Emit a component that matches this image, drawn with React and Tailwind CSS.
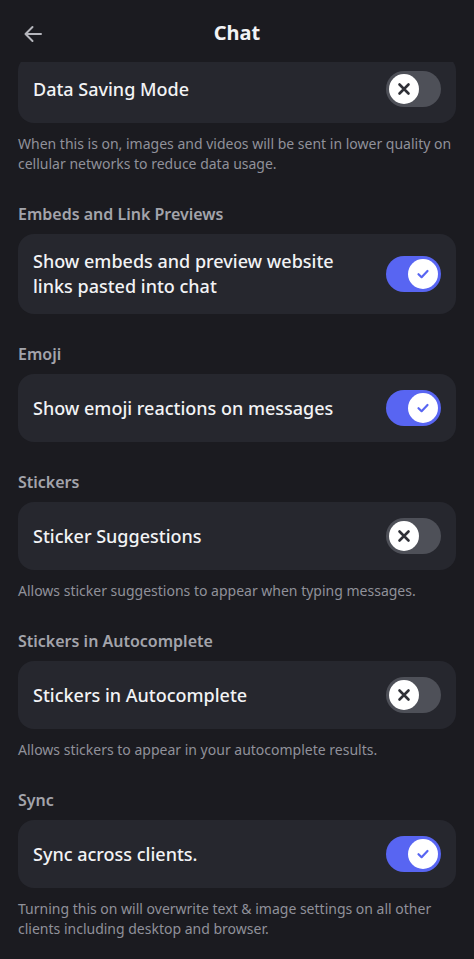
import React from 'react';

const sections = [
  {
    label: 'Data Saving Mode',
    on: false,
    desc: 'When this is on, images and videos will be sent in lower quality on cellular networks to reduce data usage.',
  },
  {
    heading: 'Embeds and Link Previews',
    label: 'Show embeds and preview website links pasted into chat',
    on: true,
  },
  { heading: 'Emoji', label: 'Show emoji reactions on messages', on: true },
  {
    heading: 'Stickers',
    label: 'Sticker Suggestions',
    on: false,
    desc: 'Allows sticker suggestions to appear when typing messages.',
  },
  {
    heading: 'Stickers in Autocomplete',
    label: 'Stickers in Autocomplete',
    on: false,
    desc: 'Allows stickers to appear in your autocomplete results.',
  },
  {
    heading: 'Sync',
    label: 'Sync across clients.',
    on: true,
    desc: 'Turning this on will overwrite text & image settings on all other clients including desktop and browser.',
  },
];

function Toggle({ on }) {
  return (
    <div
      className={`flex h-[36px] w-[55px] shrink-0 items-center rounded-full px-[3px] ${
        on ? 'justify-end bg-[#5865f2]' : 'justify-start bg-[#4e5058]'
      }`}
    >
      <div className="flex h-[30px] w-[30px] items-center justify-center rounded-full bg-white">
        {on ? (
          <svg width="14" height="14" viewBox="0 0 14 14" fill="none">
            <path d="M2.5 7.2 5.6 10.2 11.5 4" stroke="#5865f2" strokeWidth="2.2" strokeLinecap="round" strokeLinejoin="round" />
          </svg>
        ) : (
          <svg width="14" height="14" viewBox="0 0 14 14" fill="none">
            <path d="M2.5 2.5 11.5 11.5M11.5 2.5 2.5 11.5" stroke="#2f3037" strokeWidth="2.6" strokeLinecap="round" />
          </svg>
        )}
      </div>
    </div>
  );
}

export default function App() {
  return (
    <div
      className="flex h-[959px] w-full flex-col overflow-hidden bg-[#1b1b20]"
      style={{ fontFamily: '"Noto Sans", "Open Sans", sans-serif' }}
    >
      {/* Header */}
      <div className="relative z-10 flex h-[62px] shrink-0 items-center justify-center bg-[#1b1b20] pt-[3px]">
        <button className="absolute left-[20px] top-[21px] p-[2px]">
          <svg width="22" height="22" viewBox="0 0 22 22" fill="none">
            <path d="M19 11H3.5M10.5 4 3.5 11 10.5 18" stroke="#b5b6bc" strokeWidth="2" strokeLinecap="round" strokeLinejoin="round" />
          </svg>
        </button>
        <h1 className="text-[20px] font-bold text-[#f2f3f5]">Chat</h1>
      </div>

      {/* Settings */}
      <div className="-mt-[7px] flex flex-col gap-[30px] px-[18px]">
        {sections.map((s, i) => (
          <div key={i} className="flex flex-col">
            {s.heading && (
              <h2 className="mb-[9px] h-[21px] text-[16px] font-semibold leading-[21px] text-[#a3a4ab]">
                {s.heading}
              </h2>
            )}
            <div className="flex min-h-[68px] items-center justify-between gap-4 rounded-[16px] bg-[#26272e] py-[15px] pl-[15px] pr-[15px]">
              <span className="text-[18px] font-medium leading-[25px] text-[#f2f3f5]">{s.label}</span>
              <Toggle on={s.on} />
            </div>
            {s.desc && (
              <p className="mt-[11px] text-[14px] leading-[20px] text-[#90919a]">{s.desc}</p>
            )}
          </div>
        ))}
      </div>
    </div>
  );
}
